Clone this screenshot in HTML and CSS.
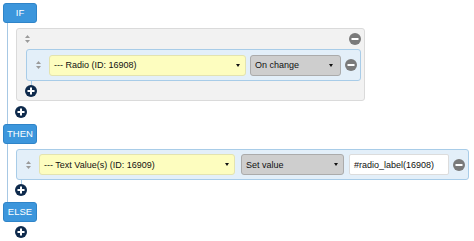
FILE: index.html
```html
<!DOCTYPE html>
<html>
<head>
<meta charset="utf-8">
<link rel="stylesheet" href="styles.css">
</head>
<body>
<div class="rule">
  <div class="tag">IF</div>
  <div class="branch">
    <div class="group">
      <div class="group-head">
        <span class="handle"><svg width="5" height="8" viewBox="0 0 5 8"><polygon points="0,3 2.5,0 5,3" /><polygon points="0,5 2.5,8 5,5" /></svg></span>
        <span class="minus"><svg width="12" height="12" viewBox="0 0 12 12"><circle cx="6" cy="6" r="6"/><rect x="2.5" y="5" width="7" height="2" fill="#fff"/></svg></span>
      </div>
      <div class="row">
        <span class="handle"><svg width="5" height="8" viewBox="0 0 5 8"><polygon points="0,3 2.5,0 5,3" /><polygon points="0,5 2.5,8 5,5" /></svg></span>
        <div class="select yellow w-radio">--- Radio (ID: 16908)<span class="caret"></span></div>
        <div class="select gray w-onchange">On change<span class="caret"></span></div>
        <span class="minus"><svg width="12" height="12" viewBox="0 0 12 12"><circle cx="6" cy="6" r="6"/><rect x="2.5" y="5" width="7" height="2" fill="#fff"/></svg></span>
      </div>
      <div class="add inner"><span class="stub"></span><span class="plus"><svg width="12" height="12" viewBox="0 0 12 12"><circle cx="6" cy="6" r="6"/><rect x="2.5" y="5" width="7" height="2" fill="#fff"/><rect x="5" y="2.5" width="2" height="7" fill="#fff"/></svg></span></div>
    </div>
    <div class="add outer"><span class="plus"><svg width="12" height="12" viewBox="0 0 12 12"><circle cx="6" cy="6" r="6"/><rect x="2.5" y="5" width="7" height="2" fill="#fff"/><rect x="5" y="2.5" width="2" height="7" fill="#fff"/></svg></span></div>
  </div>

  <div class="tag">THEN</div>
  <div class="branch">
    <div class="row then-row">
      <span class="handle"><svg width="5" height="8" viewBox="0 0 5 8"><polygon points="0,3 2.5,0 5,3" /><polygon points="0,5 2.5,8 5,5" /></svg></span>
      <div class="select yellow w-text">--- Text Value(s) (ID: 16909)<span class="caret"></span></div>
      <div class="select gray w-setvalue">Set value<span class="caret"></span></div>
      <div class="input">#radio_label(16908)</div>
      <span class="minus"><svg width="12" height="12" viewBox="0 0 12 12"><circle cx="6" cy="6" r="6"/><rect x="2.5" y="5" width="7" height="2" fill="#fff"/></svg></span>
    </div>
    <div class="add then-add"><span class="stub"></span><span class="plus"><svg width="12" height="12" viewBox="0 0 12 12"><circle cx="6" cy="6" r="6"/><rect x="2.5" y="5" width="7" height="2" fill="#fff"/><rect x="5" y="2.5" width="2" height="7" fill="#fff"/></svg></span></div>
  </div>

  <div class="tag">ELSE</div>
  <div class="else-body">
    <div class="add"><span class="plus"><svg width="12" height="12" viewBox="0 0 12 12"><circle cx="6" cy="6" r="6"/><rect x="2.5" y="5" width="7" height="2" fill="#fff"/><rect x="5" y="2.5" width="2" height="7" fill="#fff"/></svg></span></div>
  </div>
</div>
</body>
</html>
```

FILE: styles.css
```css
html, body {
  margin: 0;
  padding: 0;
  background: #fff;
}
body {
  font-family: "Liberation Sans", Arial, sans-serif;
  font-size: 9px;
  color: #111;
}
.rule {
  padding: 3px 0 0 3px;
}
.tag {
  box-sizing: border-box;
  width: 34px;
  height: 20px;
  line-height: 18px;
  background: #3c96dc;
  border: 1px solid #2f84c8;
  border-radius: 3px;
  color: #fff;
  text-align: center;
  font-size: 9.5px;
}
.branch {
  margin-left: 4px;
  border-left: 1px solid #a7c8e4;
  padding: 5px 0 6px 8px;
}
.group {
  box-sizing: border-box;
  width: 349px;
  background: #f2f2f2;
  border: 1px solid #dadada;
  border-radius: 3px;
  padding: 0 3px 3px 9px;
}
.group-head {
  height: 20px;
  display: flex;
  align-items: center;
  justify-content: space-between;
}
.group-head .handle {
  margin-left: -1px;
}
.handle {
  display: flex;
  width: 5px;
  height: 8px;
}
.handle svg {
  fill: #9a9a9a;
}
.minus, .plus {
  display: flex;
  width: 12px;
  height: 12px;
}
.minus svg {
  fill: #7a7a7a;
}
.plus svg {
  fill: #0e2a4c;
}
.row {
  box-sizing: border-box;
  height: 32px;
  display: flex;
  align-items: center;
  background: #e3eff9;
  border: 1px solid #a8cce8;
  border-radius: 3px;
  padding-left: 9px;
}
.row .handle {
  margin-right: 8px;
}
.select {
  box-sizing: border-box;
  height: 21px;
  display: flex;
  align-items: center;
  padding-left: 4px;
  border-radius: 3px;
  position: relative;
  white-space: nowrap;
}
.yellow {
  background: #fdfdbf;
  border: 1px solid #e3e3b0;
}
.gray {
  background: #cecece;
  border: 1px solid #ababab;
}
.caret {
  position: absolute;
  right: 5px;
  top: 8px;
  width: 0;
  height: 0;
  border-left: 2.5px solid transparent;
  border-right: 2.5px solid transparent;
  border-top: 3px solid #111;
}
.w-radio { width: 197px; }
.w-onchange { width: 91px; margin-left: 4px; }
.w-onchange .caret { right: 7px; }
.row > .minus { margin-left: 4px; }
.then-row {
  width: 453px;
  height: 31px;
}
.w-text { width: 196px; }
.w-setvalue { width: 103px; margin-left: 6px; }
.input {
  box-sizing: border-box;
  width: 100px;
  height: 21px;
  margin-left: 5px;
  display: flex;
  align-items: center;
  padding-left: 4px;
  background: #fff;
  border: 1px solid #dcdcdc;
  border-radius: 2px;
  white-space: nowrap;
}
.add {
  display: flex;
  flex-direction: column;
  align-items: center;
  width: 12px;
}
.stub {
  width: 1px;
  height: 4px;
  background: #a8cce8;
}
.add.inner {
  margin-left: -1px;
}
.add.outer {
  margin-top: 5px;
  margin-left: -1px;
}
.then-add {
  margin-left: -1px;
}
.else-body {
  padding: 4px 0 0 12px;
}
```
